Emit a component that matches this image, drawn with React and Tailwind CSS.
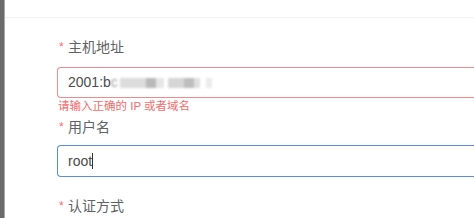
export default function App() {
  const font = { fontFamily: '"Liberation Sans", "Noto Sans CJK SC", Arial, sans-serif' };
  return (
    <div className="w-[474px] h-[218px] flex overflow-hidden bg-white" style={font}>
      <div className="w-[4px] h-full bg-[#6b6b6b]" />
      <div className="w-[1px] h-full bg-[#a9a9a9]" />
      <div className="flex-1 flex flex-col bg-white">
        <div className="h-[18px] border-b border-[#f1f1f1]" />
        <div className="flex flex-col pl-[52px] pt-[19px]">
          <div className="flex items-center h-[20px] text-[14px] text-[#606266]">
            <span className="text-[#f56c6c] text-[12px] w-[9px] ml-[2px]">*</span>
            <span>主机地址</span>
          </div>
          <div className="mt-[10px] h-[31px] border border-[#f08a8e] rounded-l-[4px] border-r-0 flex items-center pl-[10px] text-[14px] text-[#4a4b4f]">
            <span>2001:b</span>
            <span className="text-[#9a9a9a] blur-[0.8px]">c</span>
            <div className="flex items-center ml-[2px] blur-[1.2px]">
              <span className="w-[26px] h-[10px] bg-[#dcdcdc]" />
              <span className="w-[10px] h-[10px] bg-[#b9b9b9]" />
              <span className="w-[8px] h-[10px] bg-[#e6e6e6]" />
              <span className="w-[16px] h-[10px] bg-[#d6d6d6] ml-[4px]" />
              <span className="w-[10px] h-[10px] bg-[#bdbdbd]" />
              <span className="w-[6px] h-[10px] bg-[#e0e0e0]" />
              <span className="w-[6px] h-[10px] bg-[#ececec] ml-[6px]" />
            </div>
          </div>
          <div className="h-[14px] text-[11.5px] leading-[14px] text-[#f56c6c] mt-[1px] ml-[1px]">请输入正确的 IP 或者域名</div>
          <div className="flex items-center h-[20px] mt-[4px] text-[14px] text-[#606266]">
            <span className="text-[#f56c6c] text-[12px] w-[9px] ml-[2px]">*</span>
            <span>用户名</span>
          </div>
          <div className="mt-[8px] h-[32px] border-[1.5px] border-[#5591de] rounded-l-[4px] border-r-0 flex items-center pl-[10px] text-[14px] text-[#4a4b4f]">
            <span>root</span>
            <span className="w-[1px] h-[16px] bg-[#333]" />
          </div>
          <div className="flex items-center h-[20px] mt-[19px] text-[14px] text-[#606266]">
            <span className="text-[#f56c6c] text-[12px] w-[9px] ml-[2px]">*</span>
            <span>认证方式</span>
          </div>
        </div>
      </div>
    </div>
  );
}
